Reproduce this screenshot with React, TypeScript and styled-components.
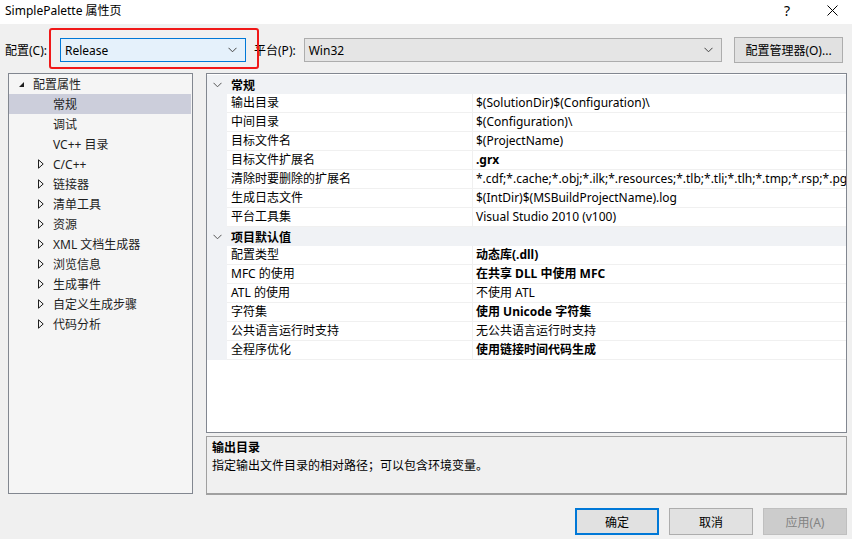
import React from "react";
import styled, { createGlobalStyle } from "styled-components";

const GlobalStyle = createGlobalStyle`
  html, body {
    margin: 0;
    padding: 0;
    background: #f0f0f0;
  }
  body {
    font-family: "Noto Sans", "Noto Sans CJK SC", sans-serif;
    font-size: 12px;
    color: #000;
  }
  * {
    box-sizing: border-box;
  }
`;

// Window
const Window = styled.div`
  width: 852px;
  height: 539px;
  display: flex;
  flex-direction: column;
  background: #f0f0f0;
  overflow: hidden;
`;

const TitleBar = styled.div`
  height: 24px;
  background: #fff;
  display: flex;
  align-items: center;
  padding: 0 0 4px 5px;
  font-size: 12px;

  .title {
    flex: 1;
  }

  .help {
    width: 20px;
    font-size: 14px;
    margin-right: 25px;
    text-align: center;
  }

  .close {
    width: 20px;
    margin-right: 10px;
    display: flex;
    justify-content: center;
  }
`;

const Toolbar = styled.div`
  display: flex;
  align-items: center;
  height: 26px;
  margin: 13px 0 10px;
  padding: 0 9px 0 5px;
`;

const Label = styled.span<{ $gap?: number }>`
  margin-left: ${({ $gap }) => $gap ?? 0}px;
  white-space: nowrap;
`;

const Combo = styled.div<{ $focused?: boolean; $gap: number }>`
  position: relative;
  margin-left: ${({ $gap }) => $gap}px;
  height: 24px;
  display: flex;
  align-items: center;
  padding: 0 8px 0 4px;
  border: 1px solid ${({ $focused }) => ($focused ? "#0078d7" : "#adadad")};
  background: ${({ $focused }) => ($focused ? "#e5f1fb" : "#e5e5e5")};

  .value {
    flex: 1;
  }
`;

const FixedCombo = styled(Combo)`
  width: 186px;
`;

const FlexCombo = styled(Combo)`
  flex: 1;
`;

const Highlight = styled.div`
  position: absolute;
  left: -12px;
  top: -11px;
  right: -14px;
  bottom: -8px;
  border: 2px solid #f01818;
  border-radius: 3px;
  pointer-events: none;
`;

const ToolButton = styled.button`
  margin-left: 12px;
  width: 109px;
  height: 26px;
  border: 1px solid #adadad;
  background: #e1e1e1;
  font: inherit;
  color: #000;
  padding: 0;
`;

const Main = styled.div`
  display: flex;
  gap: 13px;
  padding: 0 5px 0 8px;
  height: 422px;
`;

// Tree
const Tree = styled.div`
  width: 185px;
  height: 421px;
  border: 1px solid #828790;
  background: #f5f5f5;
`;

const TreeRow = styled.div<{ $level: number; $selected?: boolean }>`
  height: 20px;
  display: flex;
  align-items: center;
  padding-left: ${({ $level }) => ($level === 0 ? 4 : 24)}px;
  background: ${({ $selected }) => ($selected ? "#cccedb" : "transparent")};
  color: #1e1e1e;
  white-space: nowrap;
  margin-right: 1px;

  .arrow {
    width: 16px;
    height: 20px;
    display: flex;
    align-items: center;
    justify-content: center;
    margin-right: 4px;
  }
`;

// Property grid
const Right = styled.div`
  flex: 1;
  display: flex;
  flex-direction: column;
  gap: 3px;
  min-width: 0;
`;

const Grid = styled.div`
  height: 360px;
  border: 1px solid #828790;
  background: #fff;
  padding-top: 1px;
  overflow: hidden;
`;

const CategoryRow = styled.div`
  height: 19px;
  display: flex;
  align-items: center;
  background: #f0f2f5;
  font-weight: bold;

  .chev {
    width: 21px;
    display: flex;
    justify-content: center;
    margin-right: 3px;
  }
`;

const PropRow = styled.div`
  height: 19px;
  display: grid;
  grid-template-columns: 20px 245px 1fr;
  background: #f0f2f5;
`;

const Cell = styled.div<{ $bold?: boolean }>`
  background: #fff;
  border-bottom: 1px solid #f0f0f0;
  padding-left: 4px;
  line-height: 18px;
  white-space: nowrap;
  overflow: hidden;
  font-weight: ${({ $bold }) => ($bold ? "bold" : "normal")};
`;

const ValueCell = styled(Cell)`
  border-left: 1px solid #f0f0f0;
  padding-left: 3px;
`;

const Description = styled.div`
  height: 59px;
  border: 1px solid #a0a0a0;
  border-bottom-width: 2px;
  padding: 2px 5px;
  line-height: 18px;

  .name {
    font-weight: bold;
  }
`;

const Footer = styled.div`
  display: flex;
  justify-content: flex-end;
  gap: 10px;
  padding: 13px 5px 0 0;
`;

const DialogButton = styled.button<{ $variant?: "default" | "disabled" }>`
  width: 84px;
  height: 27px;
  font: inherit;
  padding: 0;
  background: ${({ $variant }) => ($variant === "disabled" ? "#cccccc" : "#e1e1e1")};
  color: ${({ $variant }) => ($variant === "disabled" ? "#838383" : "#000")};
  border: ${({ $variant }) =>
    $variant === "default"
      ? "2px solid #0078d7"
      : $variant === "disabled"
      ? "1px solid #bfbfbf"
      : "1px solid #adadad"};
`;

const ChevronDown = ({ color = "#444" }: { color?: string }) => (
  <svg width="9" height="6" viewBox="0 0 9 6">
    <path d="M0.5 0.8 L4.5 4.8 L8.5 0.8" fill="none" stroke={color} strokeWidth="1" />
  </svg>
);

const Expanded = () => (
  <svg width="7" height="7" viewBox="0 0 7 7">
    <path d="M6 1 L6 6 L1 6 Z" fill="#1e1e1e" />
  </svg>
);

const Collapsed = () => (
  <svg width="6" height="10" viewBox="0 0 6 10">
    <path d="M0.5 0.8 L5.2 5 L0.5 9.2 Z" fill="none" stroke="#1e1e1e" strokeWidth="1" />
  </svg>
);

const CloseIcon = () => (
  <svg width="11" height="11" viewBox="0 0 11 11">
    <path d="M0.5 0.5 L10.5 10.5 M10.5 0.5 L0.5 10.5" stroke="#000" strokeWidth="1" />
  </svg>
);

const treeItems: { label: string; level: number; expandable?: boolean; selected?: boolean }[] = [
  { label: "配置属性", level: 0 },
  { label: "常规", level: 1, selected: true },
  { label: "调试", level: 1 },
  { label: "VC++ 目录", level: 1 },
  { label: "C/C++", level: 1, expandable: true },
  { label: "链接器", level: 1, expandable: true },
  { label: "清单工具", level: 1, expandable: true },
  { label: "资源", level: 1, expandable: true },
  { label: "XML 文档生成器", level: 1, expandable: true },
  { label: "浏览信息", level: 1, expandable: true },
  { label: "生成事件", level: 1, expandable: true },
  { label: "自定义生成步骤", level: 1, expandable: true },
  { label: "代码分析", level: 1, expandable: true },
];

type Prop = { name: string; value: string; bold?: boolean };

const sections: { title: string; props: Prop[] }[] = [
  {
    title: "常规",
    props: [
      { name: "输出目录", value: "$(SolutionDir)$(Configuration)\\" },
      { name: "中间目录", value: "$(Configuration)\\" },
      { name: "目标文件名", value: "$(ProjectName)" },
      { name: "目标文件扩展名", value: ".grx", bold: true },
      {
        name: "清除时要删除的扩展名",
        value: "*.cdf;*.cache;*.obj;*.ilk;*.resources;*.tlb;*.tli;*.tlh;*.tmp;*.rsp;*.pgc;*.pgd;*.meta;$(TargetPath)",
      },
      { name: "生成日志文件", value: "$(IntDir)$(MSBuildProjectName).log" },
      { name: "平台工具集", value: "Visual Studio 2010 (v100)" },
    ],
  },
  {
    title: "项目默认值",
    props: [
      { name: "配置类型", value: "动态库(.dll)", bold: true },
      { name: "MFC 的使用", value: "在共享 DLL 中使用 MFC", bold: true },
      { name: "ATL 的使用", value: "不使用 ATL" },
      { name: "字符集", value: "使用 Unicode 字符集", bold: true },
      { name: "公共语言运行时支持", value: "无公共语言运行时支持" },
      { name: "全程序优化", value: "使用链接时间代码生成", bold: true },
    ],
  },
];

export default function App() {
  return (
    <Window>
      <GlobalStyle />
      <TitleBar>
        <span className="title">SimplePalette 属性页</span>
        <span className="help">?</span>
        <span className="close">
          <CloseIcon />
        </span>
      </TitleBar>

      <Toolbar>
        <Label>配置(C):</Label>
        <FixedCombo $focused $gap={13}>
          <span className="value">Release</span>
          <ChevronDown />
          <Highlight />
        </FixedCombo>
        <Label $gap={8}>平台(P):</Label>
        <FlexCombo $gap={8}>
          <span className="value">Win32</span>
          <ChevronDown />
        </FlexCombo>
        <ToolButton>配置管理器(O)...</ToolButton>
      </Toolbar>

      <Main>
        <Tree>
          {treeItems.map((item) => (
            <TreeRow key={item.label} $level={item.level} $selected={item.selected}>
              <span className="arrow">
                {item.level === 0 ? <Expanded /> : item.expandable ? <Collapsed /> : null}
              </span>
              {item.label}
            </TreeRow>
          ))}
        </Tree>

        <Right>
          <Grid>
            {sections.map((section) => (
              <React.Fragment key={section.title}>
                <CategoryRow>
                  <span className="chev">
                    <ChevronDown color="#555" />
                  </span>
                  {section.title}
                </CategoryRow>
                {section.props.map((p) => (
                  <PropRow key={p.name}>
                    <span />
                    <Cell>{p.name}</Cell>
                    <ValueCell $bold={p.bold}>{p.value}</ValueCell>
                  </PropRow>
                ))}
              </React.Fragment>
            ))}
          </Grid>
          <Description>
            <div className="name">输出目录</div>
            <div>指定输出文件目录的相对路径；可以包含环境变量。</div>
          </Description>
        </Right>
      </Main>

      <Footer>
        <DialogButton $variant="default">确定</DialogButton>
        <DialogButton>取消</DialogButton>
        <DialogButton $variant="disabled">应用(A)</DialogButton>
      </Footer>
    </Window>
  );
}
